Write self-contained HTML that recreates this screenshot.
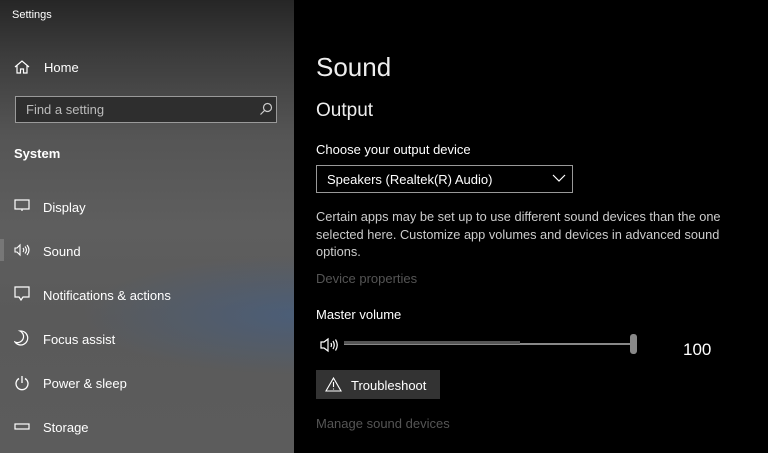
<!DOCTYPE html><html><head><style>
body{margin:0;width:768px;height:453px;overflow:hidden;background:#000;font-family:"Liberation Sans",sans-serif;position:relative}
#side{position:absolute;left:0;top:0;width:294px;height:453px;background:linear-gradient(180deg,#262626 0%,#3c3c3c 12%,#555 30%,#5e5e5e 50%,#5a5a5a 70%,#5c5c5c 100%);overflow:hidden}
#blue{position:absolute;left:80px;top:255px;width:320px;height:120px;background:radial-gradient(ellipse at 70% 50%,rgba(70,95,130,.75),rgba(70,95,130,0) 70%)}
.t{position:absolute;color:#fff;font-size:13px}
.ic{position:absolute;left:14px}
.s{position:absolute;color:#fff;font-size:13px;left:316px}
</style></head><body>
<div id="side"><div id="blue"></div>
<div class="t" style="left:12px;top:9px;font-size:11px">Settings</div>
<svg class="ic" style="top:59px" width="16" height="16" viewBox="0 0 16 16" fill="none" stroke="#fff" stroke-width="1.2"><path d="M1 8L8 2l7 6M3 6.5V14h3.5v-4h3v4H13V6.5"/></svg>
<div class="t" style="left:44px;top:60px">Home</div>
<div style="position:absolute;left:15px;top:96px;width:262px;height:27px;border:1px solid #9a9a9a;background:#2e2e2e;box-sizing:border-box"></div>
<div class="t" style="left:26px;top:102px;color:#bbb">Find a setting</div>
<svg style="position:absolute;left:259px;top:102px" width="14" height="14" viewBox="0 0 14 14" fill="none" stroke="#ccc" stroke-width="1.2"><circle cx="8.5" cy="5.5" r="4"/><path d="M5.5 8.5L1.5 12.5"/></svg>
<div class="t" style="left:14px;top:146px;font-weight:bold">System</div>
<svg class="ic" style="top:199px" width="16" height="14" viewBox="0 0 16 14" fill="none" stroke="#fff" stroke-width="1.2"><rect x="1" y="1" width="14" height="9"/><path d="M8 10v2"/></svg>
<div class="t" style="left:43px;top:200px">Display</div>
<div style="position:absolute;left:0;top:239px;width:4px;height:22px;background:#777"></div>
<svg class="ic" style="top:243px" width="16" height="14" viewBox="0 0 16 14" fill="none" stroke="#fff" stroke-width="1.1"><path d="M1 5h2l3-3v10L3 9H1z"/><path d="M9 5q1.5 2 0 4M11 3.5q3 3.5 0 7M13 2q4 5 0 10"/></svg>
<div class="t" style="left:43px;top:244px">Sound</div>
<svg class="ic" style="top:286px" width="16" height="16" viewBox="0 0 16 16" fill="none" stroke="#fff" stroke-width="1.2"><path d="M1 1h14v10H9l-2 3-2-3H1z"/></svg>
<div class="t" style="left:43px;top:288px">Notifications &amp; actions</div>
<svg class="ic" style="top:330px" width="16" height="16" viewBox="0 0 16 16" fill="none" stroke="#fff" stroke-width="1.2"><path d="M6 1a7 7 0 1 1-5 11 6 6 0 0 0 5-11z"/></svg>
<div class="t" style="left:43px;top:332px">Focus assist</div>
<svg class="ic" style="top:375px" width="16" height="16" viewBox="0 0 16 16" fill="none" stroke="#fff" stroke-width="1.3"><path d="M5 3.5a6 6 0 1 0 6 0M8 1v7"/></svg>
<div class="t" style="left:43px;top:376px">Power &amp; sleep</div>
<svg class="ic" style="top:423px" width="16" height="8" viewBox="0 0 16 8" fill="none" stroke="#fff" stroke-width="1.2"><rect x="1" y="1" width="14" height="5"/></svg>
<div class="t" style="left:43px;top:420px">Storage</div>
</div>
<div class="s" style="top:52px;font-size:26px;color:#eee">Sound</div>
<div class="s" style="top:100px;font-size:19px;color:#eee">Output</div>
<div class="s" style="top:142px">Choose your output device</div>
<div style="position:absolute;left:316px;top:165px;width:257px;height:28px;border:1px solid #999;box-sizing:border-box"></div>
<div class="s" style="left:327px;top:172px">Speakers (Realtek(R) Audio)</div>
<svg style="position:absolute;left:552px;top:174px" width="14" height="9" viewBox="0 0 14 9" fill="none" stroke="#fff" stroke-width="1.2"><path d="M1 1l6 6 6-6"/></svg>
<div class="s" style="top:208px;color:#ccc;width:415px;line-height:17.5px;font-size:12.8px">Certain apps may be set up to use different sound devices than the one selected here. Customize app volumes and devices in advanced sound options.</div>
<div class="s" style="top:271px;color:#555">Device properties</div>
<div class="s" style="top:307px">Master volume</div>
<svg style="position:absolute;left:320px;top:337px" width="20" height="16" viewBox="0 0 20 16" fill="none" stroke="#fff" stroke-width="1.2"><path d="M1 5h3l4-3v12l-4-3H1z"/><path d="M11 6q1 2 0 4M13 4q2.5 4 0 8M15.5 2.5q3.5 5.5 0 11"/></svg>
<div style="position:absolute;left:344px;top:343px;width:290px;height:2px;background:#888"></div>
<div style="position:absolute;left:344px;top:341px;width:176px;height:3px;background:#555"></div>
<div style="position:absolute;left:630px;top:334px;width:7px;height:20px;border-radius:3px;background:#888"></div>
<div class="s" style="left:683px;top:340px;font-size:17px">100</div>
<div style="position:absolute;left:316px;top:370px;width:124px;height:29px;background:#333"></div>
<svg style="position:absolute;left:325px;top:377px" width="17" height="15" viewBox="0 0 17 15" fill="none" stroke="#fff" stroke-width="1.1"><path d="M8.5 1L16 14H1z M8.5 5v5M8.5 11.5v1"/></svg>
<div class="s" style="left:351px;top:378px">Troubleshoot</div>
<div class="s" style="top:416px;color:#555">Manage sound devices</div>
</body></html>
